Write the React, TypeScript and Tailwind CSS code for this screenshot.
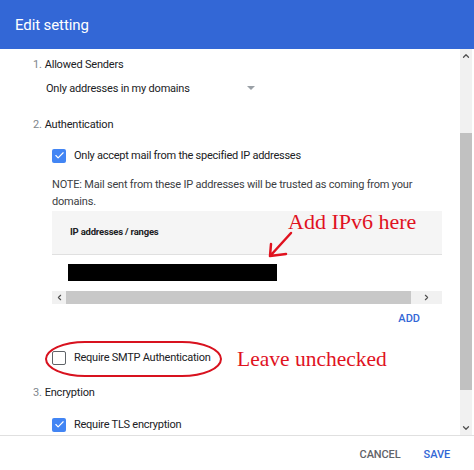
import { Check, ChevronUp, ChevronDown, ChevronLeft, ChevronRight } from "lucide-react";

const texts = {
    title: "Edit setting",
    allowedSenders: "Allowed Senders",
    onlyDomains: "Only addresses in my domains",
    authentication: "Authentication",
    onlyAcceptIp: "Only accept mail from the specified IP addresses",
    note: "NOTE: Mail sent from these IP addresses will be trusted as coming from your domains.",
    ipHeader: "IP addresses / ranges",
    add: "ADD",
    requireSmtp: "Require SMTP Authentication",
    encryption: "Encryption",
    requireTls: "Require TLS encryption",
    cancel: "CANCEL",
    save: "SAVE",
    addIpv6: "Add IPv6 here",
    leaveUnchecked: "Leave unchecked",
};

function Checkbox({ checked }: { checked: boolean }) {
    if (checked) {
        return (
            <span className="w-[14px] h-[14px] rounded-[2px] bg-[#4285f4] flex items-center justify-center shrink-0">
                <Check size={11} strokeWidth={2.5} color="#ffffff" />
            </span>
        );
    }
    return <span className="w-[14px] h-[14px] rounded-[2px] border-[1.5px] border-[#5f6368] shrink-0" />;
}

function SectionTitle({ n, label }: { n: number; label: string }) {
    return (
        <div className="pl-[33px] h-[20px] flex items-center text-[11px] tracking-[-0.2px] text-[#202124]">
            <span className="text-[#80868b] mr-[3px]">{n}.</span>
            {label}
        </div>
    );
}

function CheckRow({ checked, label }: { checked: boolean; label: string }) {
    return (
        <div className="pl-[52px] h-[20px] flex items-center gap-[8px] text-[11px] tracking-[-0.25px] text-[#202124]">
            <Checkbox checked={checked} />
            {label}
        </div>
    );
}

export default function App() {
    return (
        <div className="w-[474px] h-[470px] bg-white flex flex-col relative overflow-hidden font-['Roboto',sans-serif]">
            <div className="h-[49px] bg-[#3367d6] px-[15px] pt-[1px] flex items-center text-white text-[15px] tracking-[-0.1px] shrink-0">
                {texts.title}
            </div>

            <div className="h-[386px] flex shrink-0">
                <div className="flex-1 flex flex-col pt-[7px]">
                    <SectionTitle n={1} label={texts.allowedSenders} />
                    <div className="mt-[4px] pl-[46px] h-[20px] flex items-center text-[11px] tracking-[-0.2px] text-[#202124]">
                        <span className="w-[201px]">{texts.onlyDomains}</span>
                        <span className="w-0 h-0 border-l-[4px] border-r-[4px] border-t-[4px] border-l-transparent border-r-transparent border-t-[#9aa0a6] -mt-[3px]" />
                    </div>

                    <div className="mt-[16px]">
                        <SectionTitle n={2} label={texts.authentication} />
                    </div>
                    <div className="mt-[11px]">
                        <CheckRow checked label={texts.onlyAcceptIp} />
                    </div>
                    <p className="mt-[10px] pl-[52px] pr-[40px] text-[11px] tracking-[-0.2px] leading-[17px] text-[#3c4043]">
                        {texts.note}
                    </p>

                    <div className="ml-[52px] w-[390px] mt-[1px] flex flex-col">
                        <div className="h-[44px] bg-[#f5f5f5] border-b border-[#e0e0e0] pl-[18px] flex items-center text-[9.5px] tracking-[-0.2px] font-bold text-[#202124]">
                            {texts.ipHeader}
                        </div>
                        <div className="h-[36px] flex items-center pl-[16px]">
                            <div className="w-[209px] h-[17px] bg-black" />
                        </div>
                        <div className="h-[13px] bg-[#f1f1f1] flex items-center">
                            <span className="w-[14px] flex justify-center">
                                <ChevronLeft size={9} strokeWidth={3} color="#505050" />
                            </span>
                            <div className="w-[345px] h-[13px] bg-[#c8c8c8]" />
                            <span className="flex-1 flex justify-center">
                                <ChevronRight size={9} strokeWidth={3} color="#505050" />
                            </span>
                        </div>
                    </div>

                    <div className="h-[30px] pt-[2px] flex items-center justify-end pr-[40px] text-[11px] font-medium text-[#3367d6]">
                        {texts.add}
                    </div>

                    <div className="mt-[15px]">
                        <CheckRow checked={false} label={texts.requireSmtp} />
                    </div>

                    <div className="mt-[15px]">
                        <SectionTitle n={3} label={texts.encryption} />
                    </div>
                    <div className="mt-[12px]">
                        <CheckRow checked label={texts.requireTls} />
                    </div>
                </div>

                <div className="w-[12px] bg-[#f1f1f1] flex flex-col shrink-0">
                    <div className="h-[14px] flex items-center justify-center">
                        <ChevronUp size={10} strokeWidth={3} color="#505050" />
                    </div>
                    <div className="h-[70px]" />
                    <div className="h-[257px] bg-[#c1c1c1]" />
                    <div className="flex-1" />
                    <div className="h-[14px] flex items-center justify-center">
                        <ChevronDown size={10} strokeWidth={3} color="#505050" />
                    </div>
                </div>
                <div className="w-[2px] shrink-0" />
            </div>

            <div className="border-t border-[#e0e0e0] flex-1 flex items-center justify-end gap-[23px] pr-[24px] pt-[4px] text-[11px] tracking-[-0.1px] font-medium">
                <span className="text-[#5f6368]">{texts.cancel}</span>
                <span className="text-[#3367d6]">{texts.save}</span>
            </div>

            {/* annotations drawn over the screenshot */}
            <div className="absolute left-[288px] top-[208px] text-[22px] leading-[28px] text-[#e0121f] font-['Liberation_Serif',serif]">
                {texts.addIpv6}
            </div>
            <svg className="absolute left-[264px] top-[230px]" width="32" height="32" viewBox="0 0 32 32">
                <path d="M27 3 L7 25 M7 14 L6 26 L22 24" fill="none" stroke="#e0121f" strokeWidth="2.5" strokeLinecap="round" strokeLinejoin="round" />
            </svg>
            <div className="absolute left-[45px] top-[341px] w-[177px] h-[36px] rounded-[40px/18px] border-[2px] border-[#d8121f]" />
            <div className="absolute left-[237px] top-[345px] text-[21.5px] leading-[28px] text-[#e0121f] font-['Liberation_Serif',serif]">
                {texts.leaveUnchecked}
            </div>
        </div>
    );
}
